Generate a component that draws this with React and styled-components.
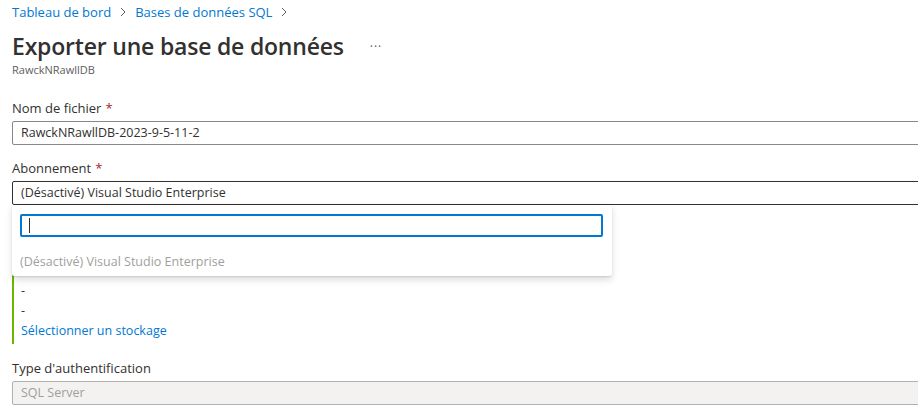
import React from "react";
import styled, { createGlobalStyle } from "styled-components";

const Global = createGlobalStyle`
  html, body { margin: 0; padding: 0; background: #fff; overflow: hidden; }
  body { font-family: "Open Sans", "Noto Sans", sans-serif; color: #323130; }
  * { box-sizing: border-box; }
`;

const Page = styled.div`
  width: 918px;
  height: 418px;
  overflow: hidden;
  padding: 2px 0 0 12px;
  position: relative;
`;

const Breadcrumb = styled.nav`
  display: flex;
  align-items: center;
  height: 20px;
  font-size: 13px;
  gap: 6px;
`;

const Crumb = styled.a`
  color: #0078d4;
  text-decoration: none;
`;

const Chevron = () => (
  <svg width="12" height="12" viewBox="0 0 12 12" fill="none" stroke="#605e5c" strokeWidth="1">
    <path d="M4 2l4 4-4 4" />
  </svg>
);

const HeaderRow = styled.div`
  display: flex;
  align-items: center;
  margin-top: 8px;
  height: 32px;
`;

const Title = styled.h1`
  margin: 0;
  font-size: 23px;
  font-weight: 600;
  color: #323130;
  letter-spacing: -0.2px;
`;

const More = styled.span`
  margin-left: 26px;
  color: #605e5c;
  font-size: 12px;
  letter-spacing: 1px;
`;

const Subtitle = styled.div`
  font-size: 11px;
  color: #605e5c;
  line-height: 16px;
`;

const Form = styled.div`
  margin-top: 20px;
  width: 940px;
  display: flex;
  flex-direction: column;
`;

const Field = styled.div`
  position: relative;
  margin-bottom: 13px;
`;

const Label = styled.div`
  font-size: 13px;
  line-height: 20px;
  margin-bottom: 3px;
  color: #323130;
`;

const Req = styled.span`
  color: #a4262c;
  margin-left: 4px;
`;

const Input = styled.div`
  height: 24px;
  border: 1px solid ${(p) => (p.$disabled ? "#b3b0ad" : p.$dark ? "#323130" : "#8a8886")};
  border-radius: 2px;
  background: ${(p) => (p.$disabled ? "#f3f2f1" : "#fff")};
  color: ${(p) => (p.$disabled ? "#a19f9d" : "#323130")};
  font-size: 12.5px;
  line-height: 22px;
  padding: 0 8px;
  white-space: nowrap;
`;

const Dropdown = styled.div`
  position: absolute;
  top: 47px;
  left: 0;
  width: 600px;
  height: 71px;
  background: #fff;
  border-radius: 2px;
  box-shadow: 0 3.2px 7.2px rgba(0, 0, 0, 0.132), 0 0.6px 1.8px rgba(0, 0, 0, 0.108);
  padding: 9px 9px 0 8px;
  z-index: 2;
`;

const Search = styled.div`
  height: 23px;
  border: 2px solid #0078d4;
  border-radius: 2px;
  display: flex;
  align-items: center;
  padding-left: 7px;
`;

const Caret = styled.span`
  width: 1px;
  height: 15px;
  background: #323130;
`;

const Option = styled.div`
  margin-top: 15px;
  font-size: 12.5px;
  line-height: 20px;
  color: #a19f9d;
`;

const Storage = styled.div`
  border-left: 2px solid #6bb700;
  padding: 63px 0 3px 7px;
  margin-bottom: 14px;
  width: 600px;
`;

const Line = styled.div`
  font-size: 12.5px;
  line-height: 20px;
  color: #323130;
`;

const Link = styled.a`
  display: block;
  font-size: 12.5px;
  line-height: 20px;
  color: #0078d4;
  text-decoration: none;
`;

export default function App() {
  return (
    <>
      <Global />
      <Page>
        <Breadcrumb>
          <Crumb>Tableau de bord</Crumb>
          <Chevron />
          <Crumb>Bases de données SQL</Crumb>
          <Chevron />
        </Breadcrumb>
        <HeaderRow>
          <Title>Exporter une base de données</Title>
          <More>···</More>
        </HeaderRow>
        <Subtitle>RawckNRawllDB</Subtitle>
        <Form>
          <Field>
            <Label>
              Nom de fichier<Req>*</Req>
            </Label>
            <Input>RawckNRawllDB-2023-9-5-11-2</Input>
          </Field>
          <Field>
            <Label>
              Abonnement<Req>*</Req>
            </Label>
            <Input $dark>(Désactivé) Visual Studio Enterprise</Input>
            <Dropdown>
              <Search>
                <Caret />
              </Search>
              <Option>(Désactivé) Visual Studio Enterprise</Option>
            </Dropdown>
          </Field>
          <Storage>
            <Line>-</Line>
            <Line>-</Line>
            <Link>Sélectionner un stockage</Link>
          </Storage>
          <Field>
            <Label>Type d'authentification</Label>
            <Input $disabled>SQL Server</Input>
          </Field>
        </Form>
      </Page>
    </>
  );
}
